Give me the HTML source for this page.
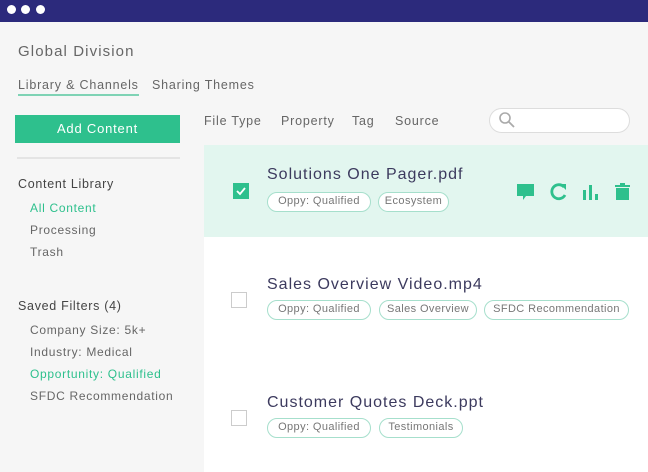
<!DOCTYPE html>
<html><head><style>
*{margin:0;padding:0;box-sizing:border-box}
body{width:648px;height:472px;overflow:hidden;background:#f6f6f6;font-family:"Liberation Sans",sans-serif;position:relative}
.a{position:absolute;white-space:nowrap}
.hd{left:0;top:0;width:648px;height:22px;background:#2c2a7c}
.dot{width:9px;height:9px;border-radius:50%;background:#fff;top:5px}
.t{font-size:12.5px;color:#666;letter-spacing:0.8px}
.s{font-size:12px;color:#666;letter-spacing:0.7px}
.g{color:#2ec08d}
.tag{height:20px;border:1.5px solid #a6dfcc;border-radius:10px;font-size:11px;color:#777;line-height:17px;text-align:center;background:#fff;letter-spacing:0.4px}
.tt{font-size:16px;color:#3c3a5e;letter-spacing:1px}
.cb{width:16px;height:16px;border:1.5px solid #ccc;background:#fff}
</style></head><body>
<div class="a hd"></div>
<div class="a dot" style="left:7px"></div><div class="a dot" style="left:21px"></div><div class="a dot" style="left:36px"></div>
<div class="a" style="left:18px;top:43px;font-size:15px;color:#666;letter-spacing:1.1px">Global Division</div>
<div class="a t" style="left:18px;top:78px">Library &amp; Channels</div>
<div class="a" style="left:18px;top:94px;width:121px;height:2px;background:#7fd3b5"></div>
<div class="a t" style="left:152px;top:78px">Sharing Themes</div>
<div class="a" style="left:15px;top:115px;width:165px;height:28px;background:#2ec08d;color:#fff;font-size:13px;text-align:center;line-height:28px;letter-spacing:0.8px">Add Content</div>
<div class="a" style="left:17px;top:157px;width:163px;height:2px;background:#e4e4e4"></div>
<div class="a t" style="left:204px;top:114px">File Type</div>
<div class="a t" style="left:281px;top:114px">Property</div>
<div class="a t" style="left:352px;top:114px">Tag</div>
<div class="a t" style="left:395px;top:114px">Source</div>
<div class="a" style="left:489px;top:108px;width:141px;height:25px;border:1.5px solid #ddd;border-radius:13px;background:#fff"></div>
<svg class="a" style="left:498px;top:111px" width="18" height="18" viewBox="0 0 18 18"><circle cx="7" cy="7" r="5" fill="none" stroke="#aaa" stroke-width="1.6"/><path d="M11 11l5 5" stroke="#aaa" stroke-width="1.8"/></svg>
<div class="a" style="left:18px;top:177px;font-size:12.5px;color:#444;letter-spacing:0.7px">Content Library</div>
<div class="a s g" style="left:30px;top:201px">All Content</div>
<div class="a s" style="left:30px;top:223px">Processing</div>
<div class="a s" style="left:30px;top:245px">Trash</div>
<div class="a" style="left:18px;top:299px;font-size:12.5px;color:#444;letter-spacing:0.7px">Saved Filters (4)</div>
<div class="a s" style="left:30px;top:323px">Company Size: 5k+</div>
<div class="a s" style="left:30px;top:345px">Industry: Medical</div>
<div class="a s g" style="left:30px;top:367px">Opportunity: Qualified</div>
<div class="a s" style="left:30px;top:389px">SFDC Recommendation</div>
<div class="a" style="left:204px;top:237px;width:444px;height:235px;background:#fff"></div>
<div class="a" style="left:204px;top:145px;width:444px;height:92px;background:#e2f6ef"></div>
<div class="a" style="left:233px;top:183px;width:16px;height:16px;background:#2ec08d"></div>
<svg class="a" style="left:233px;top:183px" width="16" height="16"><path d="M4 8l3 3 5-6" fill="none" stroke="#fff" stroke-width="1.8"/></svg>
<div class="a tt" style="left:267px;top:166px">Solutions One Pager.pdf</div>
<div class="a tag" style="left:267px;top:192px;width:104px">Oppy: Qualified</div>
<div class="a tag" style="left:378px;top:192px;width:71px">Ecosystem</div>
<svg class="a" style="left:516px;top:182px" width="118" height="20" viewBox="0 0 118 20" fill="#2ec08d">
<path d="M1 2h17v12H10l-3 4v-4H1z"/>
<path d="M48 5a7 7 0 1 0 1 8" fill="none" stroke="#2ec08d" stroke-width="2.8"/><path d="M44 2h6v6z"/>
<rect x="67" y="8" width="3" height="10"/><rect x="73" y="3" width="3" height="15"/><rect x="79" y="12" width="3" height="6"/>
<rect x="99" y="3" width="15" height="2"/><rect x="104" y="1" width="5" height="3"/><path d="M100 6h13v12h-13z"/>
</svg>
<div class="a cb" style="left:231px;top:292px"></div>
<div class="a tt" style="left:267px;top:276px">Sales Overview Video.mp4</div>
<div class="a tag" style="left:267px;top:300px;width:104px">Oppy: Qualified</div>
<div class="a tag" style="left:379px;top:300px;width:98px">Sales Overview</div>
<div class="a tag" style="left:484px;top:300px;width:145px">SFDC Recommendation</div>
<div class="a cb" style="left:231px;top:410px"></div>
<div class="a tt" style="left:267px;top:394px">Customer Quotes Deck.ppt</div>
<div class="a tag" style="left:267px;top:418px;width:104px">Oppy: Qualified</div>
<div class="a tag" style="left:379px;top:418px;width:84px">Testimonials</div>
</body></html>
